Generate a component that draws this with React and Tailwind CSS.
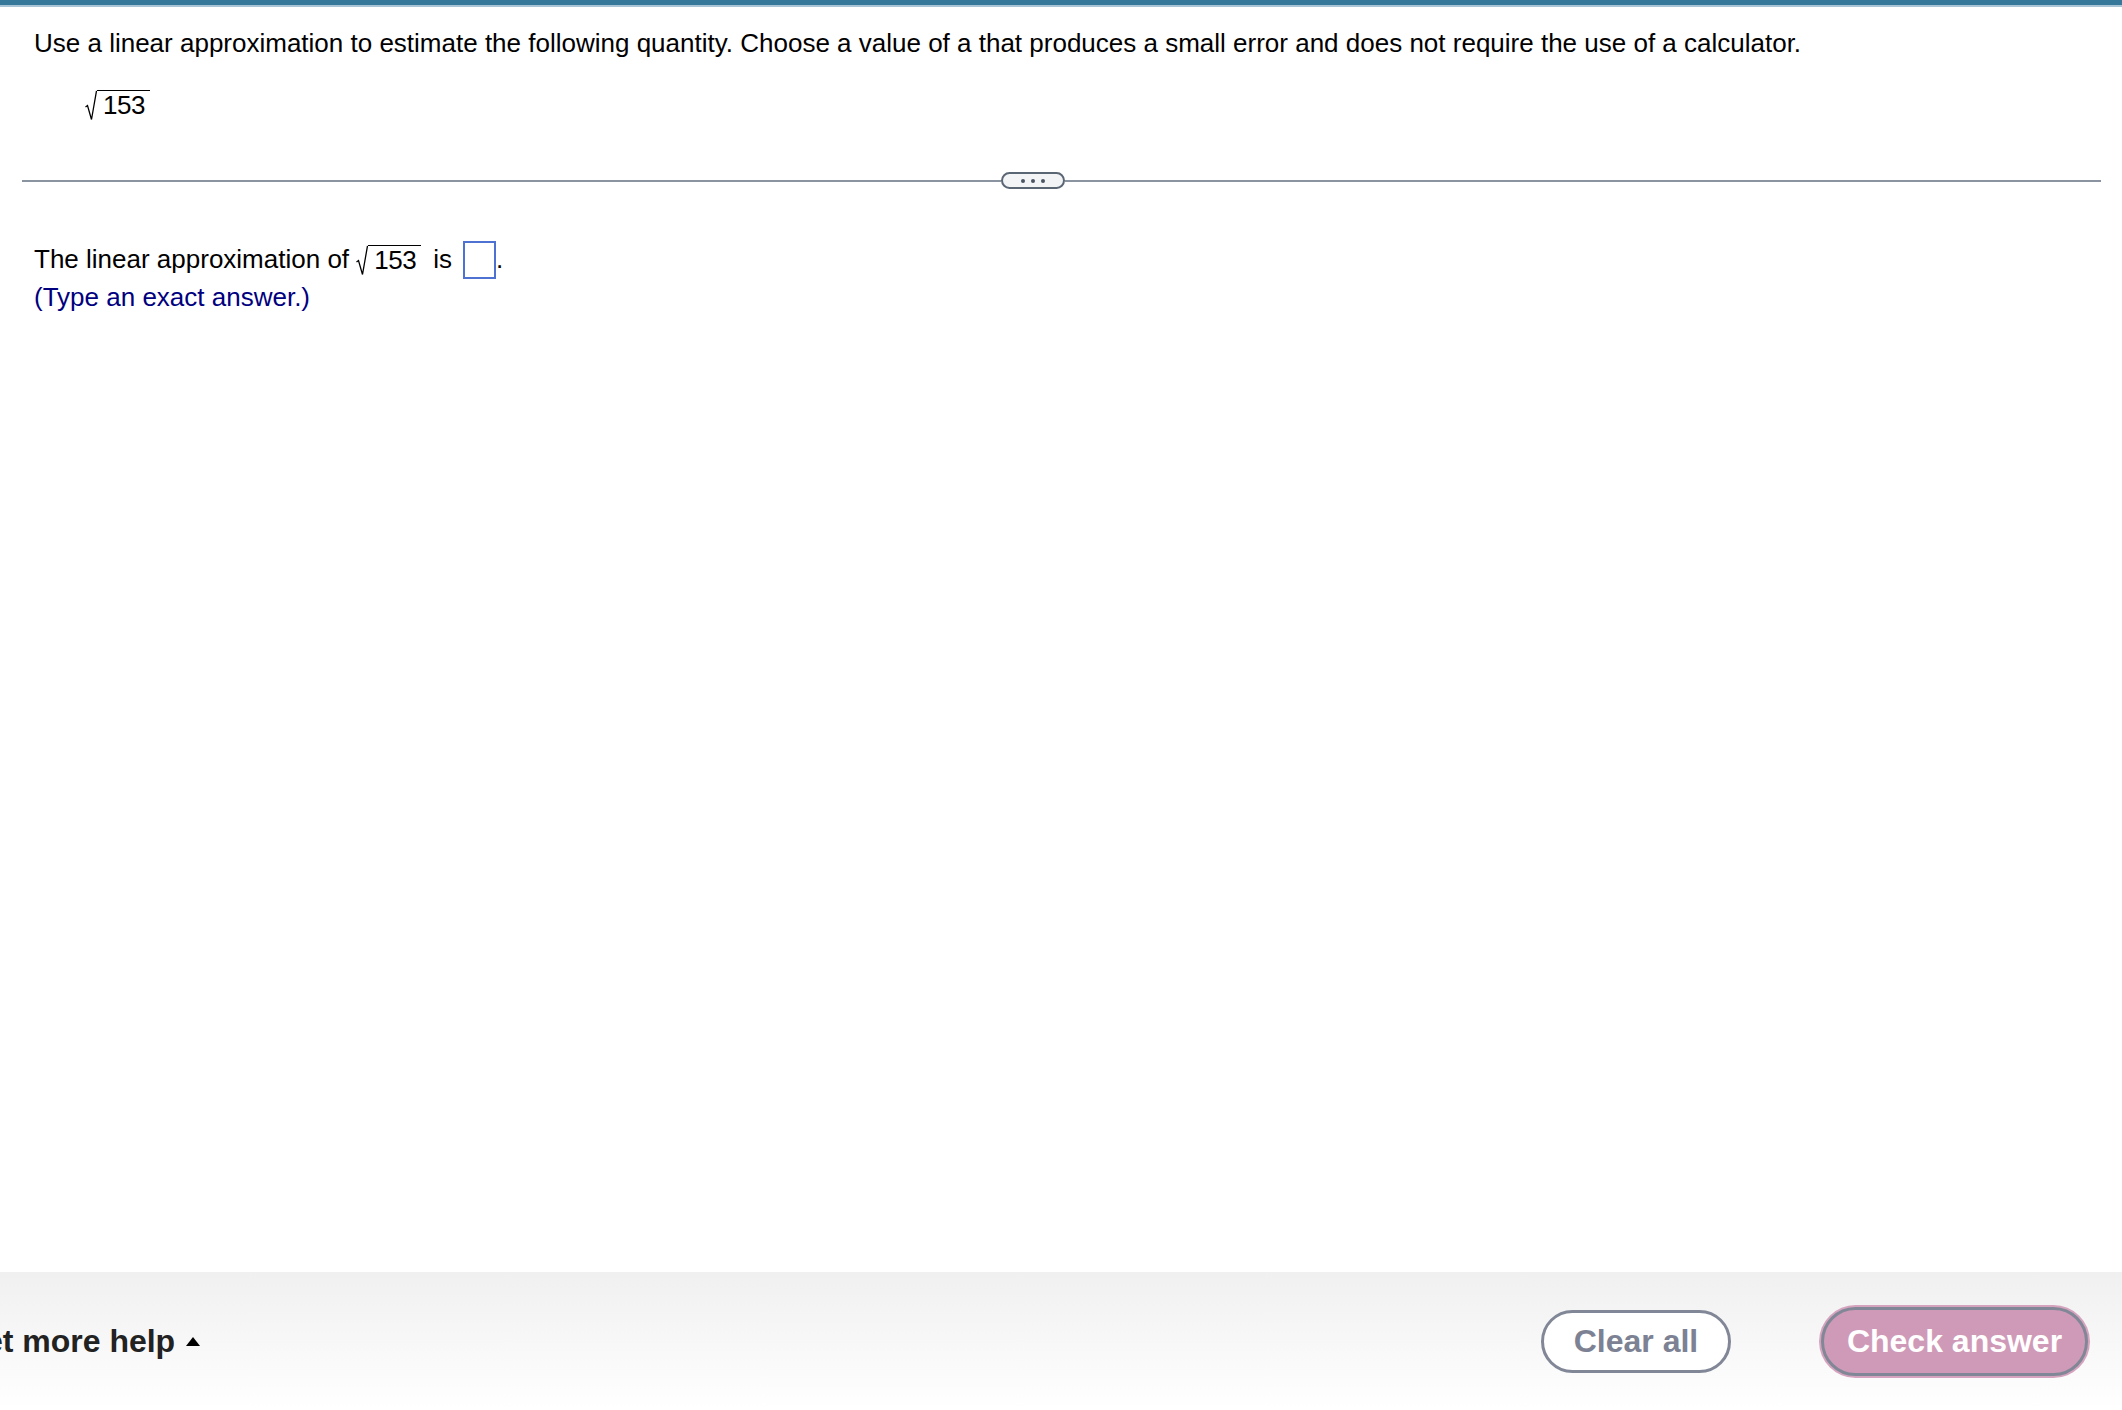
import React from 'react';

const FONT = { fontFamily: '"Liberation Sans", Arial, Helvetica, sans-serif' };

const Sqrt = ({ value }) => (
  <span className="inline-flex items-start">
    <svg width="12" height="31" viewBox="0 0 12 31" className="mb-[-5px]">
      <path d="M0.5 17 L2.5 15.5 L6.5 29.5 L11.5 0.8" fill="none" stroke="#000" strokeWidth="1.3" strokeLinejoin="miter" />
    </svg>
    <span className="border-t-[1.5px] border-black pl-[6px] pr-[5px] leading-[29px] tracking-[-0.5px]">{value}</span>
  </span>
);

export default function App() {
  return (
    <div className="h-screen w-full flex flex-col bg-white overflow-hidden" style={FONT}>
      {/* top bar */}
      <div className="h-[5px] bg-[#36789a]" />
      <div className="h-[2px] bg-[#a9c4d4]" />

      {/* question */}
      <div className="px-[34px] pt-[20px] text-[26px] text-black leading-[32px]">
        Use a linear approximation to estimate the following quantity. Choose a value of a that produces a small error and does not require the use of a calculator.
      </div>
      <div className="pl-[85px] pt-[31px] text-[26px] text-black">
        <Sqrt value="153" />
      </div>

      {/* separator */}
      <div className="flex items-center ml-[22px] mr-[21px] mt-[40px]">
        <div className="w-[979px] h-[2px] bg-[#8a93a0]" />
        <div className="w-[64px] h-[17px] rounded-full border-2 border-[#5b6675] bg-[#f3f4f6] flex items-center justify-center gap-[6px]">
          <span className="w-[4px] h-[4px] rounded-full bg-[#4b5563]" />
          <span className="w-[4px] h-[4px] rounded-full bg-[#4b5563]" />
          <span className="w-[4px] h-[4px] rounded-full bg-[#4b5563]" />
        </div>
        <div className="flex-1 h-[2px] bg-[#8a93a0]" />
      </div>

      {/* answer */}
      <div className="px-[34px] pt-[52px] text-[26px] text-black">
        <div className="flex items-end leading-[32px]">
          <span>The linear approximation of&nbsp;</span>
          <Sqrt value="153" />
          <span className="ml-[12px]">is</span>
          <span className="ml-[11px] mb-[-4px] w-[33px] h-[38px] border-2 border-[#4d72d1] bg-white" />
          <span>.</span>
        </div>
        <div className="text-[#00007f] leading-[34px] mt-[5px]">(Type an exact answer.)</div>
      </div>

      <div className="flex-1" />

      {/* footer */}
      <div className="h-[138px] bg-gradient-to-b from-[#f0f0f0] to-white flex items-center justify-between pr-[34px]">
        <div className="ml-[-40px] flex items-center gap-[11px] text-[32px] font-bold text-[#222222]">
          <span>Get more help</span>
          <svg width="14" height="9" viewBox="0 0 14 9">
            <polygon points="7,0 14,9 0,9" fill="#000" />
          </svg>
        </div>
        <div className="flex items-center gap-[90px]">
          <button className="w-[190px] h-[63px] rounded-full border-[3px] border-[#818796] bg-white text-[32px] font-bold text-[#7c8293]">
            Clear all
          </button>
          <button className="w-[267px] h-[69px] rounded-full border-[3px] border-[#818796] bg-[#cf9ab8] text-[32px] font-bold text-white ring-2 ring-[#d6a3bf]">
            Check answer
          </button>
        </div>
      </div>
    </div>
  );
}
